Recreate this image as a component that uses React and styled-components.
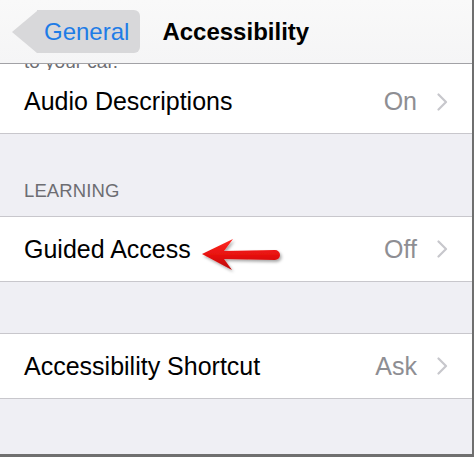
import React from "react";
import styled, { createGlobalStyle } from "styled-components";

const GlobalStyle = createGlobalStyle`
  html, body {
    margin: 0;
    padding: 0;
    background: #6f6f6f;
  }
  body {
    font-family: "Liberation Sans", Arial, sans-serif;
    -webkit-font-smoothing: antialiased;
  }
`;

const Screen = styled.div`
  width: 472px;
  height: 454px;
  background: #efeff4;
  overflow: hidden;
  display: flex;
  flex-direction: column;
  border-right: 2px solid #6f6f6f;
  border-bottom: 3px solid #6f6f6f;
`;

const NavBar = styled.header`
  height: 64px;
  flex-shrink: 0;
  display: flex;
  align-items: center;
  background: linear-gradient(#f9f9f9, #f5f5f6);
  border-bottom: 1px solid #a2a2a6;
  box-sizing: border-box;
  padding-left: 12px;
`;

const BackButton = styled.div`
  display: flex;
  align-items: center;
  height: 43px;
`;

const BackTip = styled.div`
  width: 0;
  height: 0;
  border-top: 21px solid transparent;
  border-bottom: 21px solid transparent;
  border-right: 25px solid #d8d8da;
`;

const BackLabel = styled.div`
  height: 43px;
  display: flex;
  align-items: center;
  padding: 0 11px 0 7px;
  background: #d8d8da;
  border-radius: 0 6px 6px 0;
  color: #1e7ce6;
  font-size: 24px;
`;

const Title = styled.h1`
  margin: 0 0 0 22px;
  font-size: 24px;
  font-weight: 700;
  color: #000;
`;

const Group = styled.section`
  background: #fff;
  border-top: ${(p) => (p.$noTop ? "none" : "1px solid #c8c7cc")};
  border-bottom: 1px solid #c8c7cc;
`;

const Gap = styled.div`
  height: ${(p) => p.$h}px;
  flex-shrink: 0;
  display: flex;
  align-items: flex-end;
  box-sizing: border-box;
`;

const SectionHeader = styled.div`
  padding: 0 0 14px 24px;
  font-size: 18.5px;
  color: #6d6d72;
  letter-spacing: 0.1px;
`;

/* tail of the previous section's footer, scrolled under the nav bar */
const ClippedFooter = styled.div`
  height: 6px;
  overflow: hidden;
  padding-left: 24px;
  & span {
    display: block;
    margin-top: -12px;
    font-size: 19px;
    line-height: 19px;
    color: #6d6d72;
  }
`;

const Row = styled.div`
  position: relative;
  height: ${(p) => p.$h}px;
  box-sizing: border-box;
  display: flex;
  align-items: center;
  padding: 0 24px 0 24px;
`;

const Label = styled.span`
  flex: 1;
  font-size: 25px;
  color: #000;
`;

const Value = styled.span`
  font-size: 25px;
  color: #8e8e93;
  margin-right: 20px;
`;

const Chevron = () => (
  <svg width="11" height="18" viewBox="0 0 11 18">
    <polyline
      points="1.5,1.5 9,9 1.5,16.5"
      fill="none"
      stroke="#c7c7cc"
      strokeWidth="2.2"
      strokeLinecap="round"
      strokeLinejoin="round"
    />
  </svg>
);

const Pointer = styled.svg`
  position: absolute;
  left: 199px;
  top: 19px;
  overflow: visible;
`;

const RedArrow = () => (
  <Pointer width="84" height="38" viewBox="0 0 84 38">
    <defs>
      <linearGradient id="arrowFill" x1="0" y1="0" x2="0" y2="1">
        <stop offset="0" stopColor="#ff2a22" />
        <stop offset="0.55" stopColor="#e5100f" />
        <stop offset="1" stopColor="#b80606" />
      </linearGradient>
      <filter id="arrowShadow" x="-20%" y="-30%" width="150%" height="180%">
        <feDropShadow dx="1.5" dy="2" stdDeviation="1.6" floodColor="#000" floodOpacity="0.35" />
      </filter>
    </defs>
    <path
      d="M3 18 L34 3 L25 15 L76 14 A5 5 0 0 1 76 24 L25 23 L33 34 Z"
      fill="url(#arrowFill)"
      filter="url(#arrowShadow)"
    />
  </Pointer>
);

const SettingRow = ({ label, value, h = 65, children }) => (
  <Row $h={h}>
    <Label>{label}</Label>
    <Value>{value}</Value>
    <Chevron />
    {children}
  </Row>
);

export default function App() {
  return (
    <>
      <GlobalStyle />
      <Screen>
        <NavBar>
          <BackButton>
            <BackTip />
            <BackLabel>General</BackLabel>
          </BackButton>
          <Title>Accessibility</Title>
        </NavBar>

        <Group $noTop>
          <ClippedFooter>
            <span>to your car.</span>
          </ClippedFooter>
          <SettingRow label="Audio Descriptions" value="On" h={63} />
        </Group>

        <Gap $h={82}>
          <SectionHeader>LEARNING</SectionHeader>
        </Gap>

        <Group>
          <SettingRow label="Guided Access" value="Off" h={64}>
            <RedArrow />
          </SettingRow>
        </Group>

        <Gap $h={51} />

        <Group>
          <SettingRow label="Accessibility Shortcut" value="Ask" h={64} />
        </Group>
      </Screen>
    </>
  );
}
